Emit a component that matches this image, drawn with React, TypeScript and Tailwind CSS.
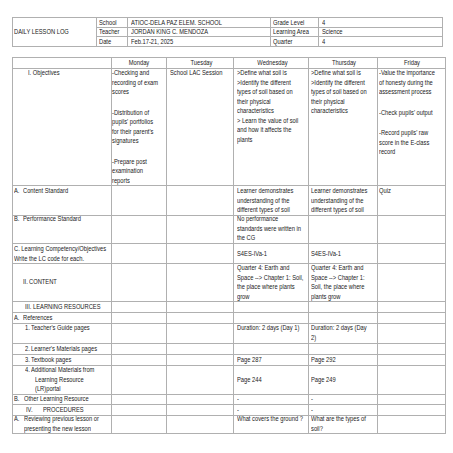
import type { ReactNode } from "react";

// the screenshot is a squashed landscape document, so text is compressed horizontally
function S({ children }: { children: ReactNode }) {
  return <span className="block origin-left scale-x-[0.72] whitespace-nowrap">{children}</span>;
}

function Lines({ lines }: { lines: string[] }) {
  return (
    <>
      {lines.map((l, i) => (
        <S key={i}>{l}</S>
      ))}
    </>
  );
}

function Paras({ paras }: { paras: string[][] }) {
  return (
    <>
      {paras.map((p, i) => (
        <div key={i} className={i > 0 ? "mt-[11px]" : ""}>
          <Lines lines={p} />
        </div>
      ))}
    </>
  );
}

function Mark({ m, w, children }: { m: string; w: string; children: ReactNode }) {
  return (
    <div className="flex">
      <span className={`${w} shrink-0`}>
        <S>{m}</S>
      </span>
      <div>{children}</div>
    </div>
  );
}

function Day({ children }: { children: ReactNode }) {
  return <span className="block origin-center scale-x-[0.72] whitespace-nowrap text-center">{children}</span>;
}

const pads = ["pl-[1px]", "pl-0", "pl-[3px]", "pl-[3px]", "pl-[2px]", "pl-[1px]"];

type Row = { h: string; cells: ReactNode[]; mid?: number[] };

const rows: Row[] = [
  {
    h: "h-[10px]",
    cells: [null, <Day>Monday</Day>, <Day>Tuesday</Day>, <Day>Wednesday</Day>, <Day>Thursday</Day>, <Day>Friday</Day>],
  },
  {
    h: "h-[118px]",
    cells: [
      <div className="pl-[14px]">
        <S>I. Objectives</S>
      </div>,
      <Paras
        paras={[
          ["-Checking and", "recording of exam", "scores"],
          ["-Distribution of", "pupils' portfolios", "for their parent's", "signatures"],
          ["-Prepare post", "examination", "reports"],
        ]}
      />,
      <S>School LAC Session</S>,
      <Lines
        lines={[
          ">Define what soil is",
          ">Identify the different",
          "types of soil based on",
          "their physical",
          "characteristics",
          "> Learn the value of soil",
          "and how it affects the",
          "plants",
        ]}
      />,
      <Lines
        lines={[
          ">Define what soil is",
          ">Identify the different",
          "types of soil based on",
          "their physical",
          "characteristics",
        ]}
      />,
      <Paras
        paras={[
          ["-Value the importance", "of honesty during the", "assessment process"],
          ["-Check pupils' output"],
          ["-Record pupils' raw", "score in the E-class", "record"],
        ]}
      />,
    ],
  },
  {
    h: "h-[28px]",
    cells: [
      <Mark m="A." w="w-[9px]">
        <S>Content Standard</S>
      </Mark>,
      null,
      null,
      <Lines lines={["Learner demonstrates", "understanding of the", "different types of soil"]} />,
      <Lines lines={["Learner demonstrates", "understanding of the", "different types of soil"]} />,
      <S>Quiz</S>,
    ],
  },
  {
    h: "h-[30px]",
    cells: [
      <Mark m="B." w="w-[9px]">
        <S>Performance Standard</S>
      </Mark>,
      null,
      null,
      <Lines lines={["No performance", "standards were written in", "the CG"]} />,
      null,
      null,
    ],
  },
  {
    h: "h-[19px]",
    cells: [
      <Lines lines={["C. Learning Competency/Objectives", "Write the LC code for each."]} />,
      null,
      null,
      <S>S4ES-IVa-1</S>,
      <S>S4ES-IVa-1</S>,
      null,
    ],
    mid: [3, 4],
  },
  {
    h: "h-[39px]",
    cells: [
      <div className="pl-[9px]">
        <Mark m="II." w="w-[6px]">
          <S>CONTENT</S>
        </Mark>
      </div>,
      null,
      null,
      <Lines lines={["Quarter 4: Earth and", "Space --> Chapter 1: Soil,", "the place where plants", "grow"]} />,
      <Lines lines={["Quarter 4: Earth and", "Space --> Chapter 1:", "Soil, the place where", "plants grow"]} />,
      null,
    ],
    mid: [0],
  },
  {
    h: "h-[11px]",
    cells: [
      <div className="pl-[11px]">
        <S>III. LEARNING RESOURCES</S>
      </div>,
      null,
      null,
      null,
      null,
      null,
    ],
  },
  {
    h: "h-[10px]",
    cells: [
      <Mark m="A." w="w-[9px]">
        <S>References</S>
      </Mark>,
      null,
      null,
      null,
      null,
      null,
    ],
  },
  {
    h: "h-[21px]",
    cells: [
      <div className="pl-[11px]">
        <Mark m="1." w="w-[6px]">
          <S>Teacher's Guide pages</S>
        </Mark>
      </div>,
      null,
      null,
      <S>Duration: 2 days (Day 1)</S>,
      <Lines lines={["Duration: 2 days (Day", "2)"]} />,
      null,
    ],
  },
  {
    h: "h-[11px]",
    cells: [
      <div className="pl-[11px]">
        <Mark m="2." w="w-[6px]">
          <S>Learner's Materials pages</S>
        </Mark>
      </div>,
      null,
      null,
      null,
      null,
      null,
    ],
  },
  {
    h: "h-[10px]",
    cells: [
      <div className="pl-[11px]">
        <Mark m="3." w="w-[6px]">
          <S>Textbook pages</S>
        </Mark>
      </div>,
      null,
      null,
      <S>Page 287</S>,
      <S>Page 292</S>,
      null,
    ],
  },
  {
    h: "h-[29px]",
    cells: [
      <div className="pl-[11px]">
        <Mark m="4." w="w-[6px]">
          <S>Additional Materials from</S>
          <div className="pl-[4px]">
            <S>Learning Resource</S>
            <S>(LR)portal</S>
          </div>
        </Mark>
      </div>,
      null,
      null,
      <S>Page 244</S>,
      <S>Page 249</S>,
      null,
    ],
    mid: [3, 4],
  },
  {
    h: "h-[11px]",
    cells: [
      <Mark m="B." w="w-[10px]">
        <S>Other Learning Resource</S>
      </Mark>,
      null,
      null,
      <S>-</S>,
      <S>-</S>,
      null,
    ],
  },
  {
    h: "h-[9px]",
    cells: [
      <div className="pl-[12px]">
        <Mark m="IV." w="w-[17px]">
          <S>PROCEDURES</S>
        </Mark>
      </div>,
      null,
      null,
      <S>-</S>,
      <S>-</S>,
      null,
    ],
  },
  {
    h: "h-[20px]",
    cells: [
      <Mark m="A." w="w-[10px]">
        <Lines lines={["Reviewing previous lesson or", "presenting the new lesson"]} />
      </Mark>,
      null,
      null,
      <S>What covers the ground ?</S>,
      <Lines lines={["What are the types of", "soil?"]} />,
      null,
    ],
  },
];

const head = [
  ["School", "ATIOC-DELA PAZ ELEM. SCHOOL", "Grade Level", "4"],
  ["Teacher", "JORDAN KING C. MENDOZA", "Learning Area", "Science"],
  ["Date", "Feb.17-21, 2025", "Quarter", "4"],
];

export default function App() {
  return (
    <div className="min-h-screen overflow-hidden bg-white pl-[12px] pt-[17px] font-['Liberation_Sans',Arial,sans-serif] text-[8px] leading-[9.5px] text-[#1a1a1a]">
      <div className="grid w-[431px] grid-cols-[84px_31px_143px_48px_124px] grid-rows-[10px_9px_10px] border-l border-t border-[#b0b0b0]">
        <div className="row-span-3 flex items-center border-b border-r border-[#b0b0b0] pl-[1px]">
          <S>DAILY LESSON LOG</S>
        </div>
        {head.map((r) =>
          r.map((t, i) => (
            <div
              key={r[0] + i}
              className={`flex items-center border-b border-r border-[#b0b0b0] ${i % 2 === 0 ? "pl-[2px]" : "pl-[3px]"}`}
            >
              <S>{t}</S>
            </div>
          ))
        )}
      </div>

      <div className="mt-[10px] w-[434px] border-l border-t border-[#b0b0b0]">
        {rows.map((row, ri) => (
          <div key={ri} className={`grid grid-cols-[99px_55px_67px_75px_69px_68px] ${row.h}`}>
            {row.cells.map((c, ci) => (
              <div
                key={ci}
                className={`border-b border-r border-[#b0b0b0] ${pads[ci]} ${
                  row.mid?.includes(ci) ? "flex flex-col justify-center" : ""
                }`}
              >
                {c}
              </div>
            ))}
          </div>
        ))}
      </div>
    </div>
  );
}
